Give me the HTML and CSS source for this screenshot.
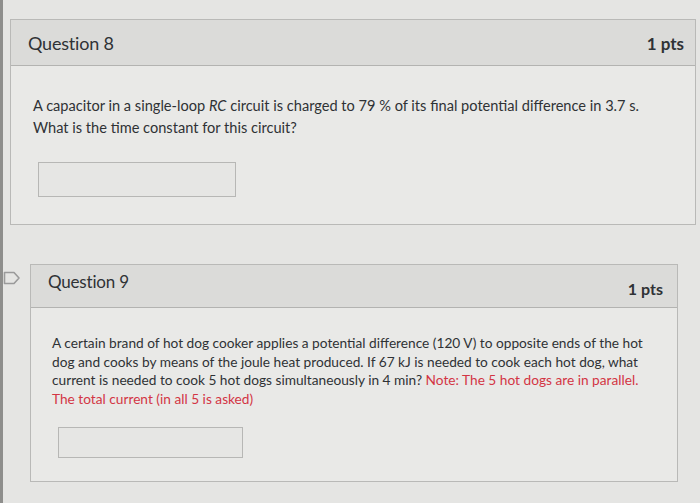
FILE: index.html
```html
<!DOCTYPE html>
<html lang="en">
<head>
<meta charset="utf-8">
<title>Quiz</title>
<link rel="stylesheet" href="styles.css">
</head>
<body>
<div class="page">
  <section class="question q8">
    <header class="q-head">
      <h2 class="q-title">Question 8</h2>
      <span class="q-pts">1 pts</span>
    </header>
    <div class="q-body">
      <p class="q-text">A capacitor in a single-loop <i>RC</i> circuit is charged to 79 % of its final potential difference in 3.7 s. What is the time constant for this circuit?</p>
      <div class="answer"></div>
    </div>
  </section>

  <div class="q-row">
    <svg class="flag" width="18" height="16" viewBox="0 0 18 16" aria-hidden="true">
      <path d="M1.5 2.5 H11 L16 8 L11 13.5 H1.5 Z" fill="none" stroke="#9a9a9a" stroke-width="1.6" stroke-linejoin="round"/>
    </svg>
    <section class="question q9">
      <header class="q-head">
        <h2 class="q-title">Question 9</h2>
        <span class="q-pts">1 pts</span>
      </header>
      <div class="q-body">
        <p class="q-text">A certain brand of hot dog cooker applies a potential difference (120 V) to opposite ends of the hot dog and cooks by means of the joule heat produced. If 67 kJ is needed to cook each hot dog, what current is needed to cook 5 hot dogs simultaneously in 4 min? <span class="note">Note: The 5 hot dogs are in parallel. The total current (in all 5 is asked)</span></p>
        <div class="answer"></div>
      </div>
    </section>
  </div>
</div>
</body>
</html>
```

FILE: styles.css
```css
html, body {
  margin: 0;
  padding: 0;
}
body {
  background: #e5e5e3;
  font-family: Lato, "Open Sans", sans-serif;
  color: #2f3235;
  width: 700px;
  height: 503px;
  overflow: hidden;
}
.page {
  border-left: 3px solid #8e8e8c;
  height: 503px;
  box-sizing: border-box;
  padding-top: 19px;
}
.question {
  border: 1px solid #b9b9b7;
  background: #e9e9e7;
  box-sizing: border-box;
}
.q8 {
  margin-left: 7px;
  width: 686px;
}
.q-head {
  display: flex;
  justify-content: space-between;
  align-items: center;
  background: #dbdbd9;
  border-bottom: 1px solid #b3b3b1;
  box-sizing: border-box;
}
.q-title {
  margin: 0;
  font-weight: 400;
  letter-spacing: -0.2px;
}
.q-pts {
  font-weight: 700;
}
.q8 .q-head {
  height: 46px;
  padding: 0 11px 0 17px;
}
.q8 .q-title { font-size: 18px; }
.q8 .q-pts { font-size: 17px; padding-top: 2px; }
.q-text {
  margin: 0;
}
.q8 .q-body {
  padding: 29px 40px 27px 22px;
}
.q8 .q-text {
  font-size: 14.6px;
  line-height: 22px;
}
.q8 .answer {
  margin: 23px 0 0 5px;
  width: 198px;
  height: 35px;
}
.answer {
  border: 1px solid #b7b7b5;
  background: #e6e6e4;
  box-sizing: border-box;
}
.q-row {
  display: flex;
  align-items: flex-start;
  margin-top: 39px;
}
.flag {
  margin-top: 6px;
  flex: none;
}
.q9 {
  margin-left: 9px;
  width: 648px;
}
.q9 .q-head {
  height: 43px;
  padding: 0 14px 0 17px;
}
.q9 .q-title { font-size: 17px; margin-top: -10px; }
.q9 .q-pts { font-size: 16px; margin-top: 4px; }
.q9 .q-body {
  padding: 26px 18px 23px 21px;
}
.q9 .q-text {
  font-size: 13.7px;
  line-height: 18.5px;
}
.note {
  color: #d33544;
}
.q9 .answer {
  margin: 19px 0 0 6px;
  width: 185px;
  height: 31px;
}
```
